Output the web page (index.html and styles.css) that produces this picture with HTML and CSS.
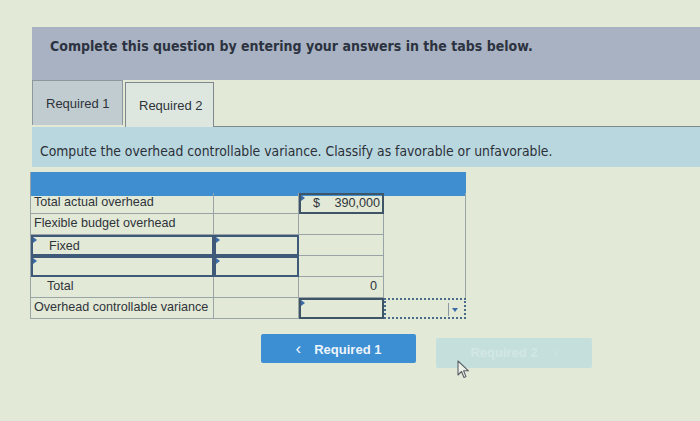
FILE: index.html
```html
<!DOCTYPE html>
<html>
<head>
<meta charset="utf-8">
<link rel="stylesheet" href="styles.css">
</head>
<body>
<div class="page">
  <div class="banner">Complete this question by entering your answers in the tabs below.</div>
  <div class="tabs">
    <div class="tab tab-inactive">Required 1</div>
    <div class="tab tab-active">Required 2</div>
    <div class="tab-rest"></div>
  </div>
  <div class="prompt">Compute the overhead controllable variance. Classify as favorable or unfavorable.</div>
  <div class="grid">
    <div class="head"></div>
    <div class="c lbl">Total actual overhead</div><div class="c"></div><div class="c inp money"><span class="flag"></span><span>$</span><span>390,000</span></div><div class="c last"></div>
    <div class="c lbl">Flexible budget overhead</div><div class="c"></div><div class="c"></div><div class="c last"></div>
    <div class="c lbl ind dark"><span class="flag"></span>Fixed</div><div class="c dark"><span class="flag"></span></div><div class="c"></div><div class="c last"></div>
    <div class="c lbl dark"><span class="flag"></span></div><div class="c dark"><span class="flag"></span></div><div class="c"></div><div class="c last"></div>
    <div class="c lbl ind">Total</div><div class="c"></div><div class="c num">0</div><div class="c last"></div>
    <div class="c lbl">Overhead controllable variance</div><div class="c"></div><div class="c inp"><span class="flag"></span></div><div class="c sel"><span class="arrow"></span></div>
  </div>
  <div class="nav">
    <div class="btn btn-prev"><span class="chev">&lsaquo;</span>Required 1</div>
    <div class="btn btn-next">Required 2 <span class="chev2">&rsaquo;</span></div>
  </div>
  <svg class="cursor" width="14" height="20" viewBox="0 0 14 20"><path d="M1 1 L1 15 L4.5 11.5 L7 17.5 L9 16.6 L6.6 10.8 L11.5 10.8 Z" fill="#eef1e8" stroke="#5a6068" stroke-width="1.1" stroke-linejoin="round"/></svg>
</div>
</body>
</html>
```
FILE: styles.css
```css
html, body { margin: 0; padding: 0; }
body {
  background: #e3e9d7;
  width: 700px;
  height: 421px;
  overflow: hidden;
  font-family: "DejaVu Sans", "Liberation Sans", sans-serif;
}
.page { position: relative; padding-top: 27px; height: 394px; }
.banner {
  margin-left: 32px;
  height: 53px;
  background: #a8b2c2;
  box-sizing: border-box;
  padding: 11px 0 0 18px;
  font-size: 14px;
  font-weight: bold;
  font-stretch: condensed;
  color: #2c3240;
}
.tabs { display: flex; align-items: flex-end; margin-left: 32px; height: 47px; }
.tab {
  box-sizing: border-box;
  font-family: "Liberation Sans", sans-serif;
  font-size: 13px;
  color: #2e333a;
  padding-left: 13px;
}
.tab-inactive {
  width: 91px; height: 45px;
  background: #c1ccd0;
  border: 1px solid #8e989c;
  border-bottom: none;
  padding-top: 15px;
  margin-bottom: 2px;
}
.tab-active {
  width: 89px; height: 45px;
  margin-left: 2px;
  background: #dde7e0;
  border: 1px solid #7e878b;
  border-bottom: none;
  padding-top: 15px;
}
.tab-rest { flex: 1; border-bottom: 1px solid #7f8a90; }
.prompt {
  margin-left: 32px;
  height: 40px;
  background: #b9d7df;
  box-sizing: border-box;
  padding: 16px 0 0 8px;
  font-size: 13.8px;
  font-stretch: condensed;
  color: #2c3038;
}
.grid {
  margin: 5px 0 0 30px;
  width: 436px;
  display: grid;
  grid-template-columns: 183px 85px 85px 82px;
  grid-auto-rows: 21px;
  border-left: 1px solid #9aa3a6;
  font-family: "Liberation Sans", sans-serif;
  font-size: 12.6px;
  color: #2f343a;
}
.head { grid-column: 1 / 5; height: 24px; background: #3f8fd0; }
.c {
  position: relative;
  box-sizing: border-box;
  border-right: 1px solid #9aa3a6;
  border-bottom: 1px solid #9aa3a6;
  padding: 2px 3px 0 3px;
  white-space: nowrap;
}
.last { border-bottom: none; border-right: 1px solid #9aa3a6; }
.ind { padding-left: 16px; }
.dark { border: 2px solid #3e5a78; }
.inp { border: 2px solid #3e5568; }
.money { display: flex; justify-content: space-between; padding: 1px 2px 0 12px; }
.num { text-align: right; padding-right: 6px; }
.flag {
  position: absolute; left: 0; top: 0;
  width: 0; height: 0;
  border-top: 3px solid transparent;
  border-bottom: 3px solid transparent;
  border-left: 4px solid #3a6aa8;
}
.sel { border: 2px dotted #4a6a8c; }
.arrow {
  position: absolute; right: 3px; top: 3px;
  width: 12px; height: 13px;
  border-left: 1px solid #8a96a0;
}
.arrow::after {
  content: ""; position: absolute; left: 3px; top: 5px;
  border-left: 3px solid transparent; border-right: 3px solid transparent;
  border-top: 4px solid #3a6aa8;
}
.nav { display: flex; margin: 15px 0 0 261px; gap: 20px; align-items: flex-start; }
.btn {
  box-sizing: border-box;
  width: 155px; height: 29px;
  font-family: "Liberation Sans", sans-serif;
  font-size: 13px; font-weight: bold;
  text-align: center; line-height: 29px;
  border-radius: 2px;
}
.btn-prev { background: #3b8fd2; color: #eef4fb; }
.chev { font-size: 17px; margin-right: 13px; font-weight: normal; }
.btn-next { width: 156px; height: 30px; margin-top: 4px; background: #c5dfdd; color: #d2e7e5; }
.chev2 { margin-left: 12px; font-weight: normal; }
.cursor { position: absolute; left: 457px; top: 360px; }
```
